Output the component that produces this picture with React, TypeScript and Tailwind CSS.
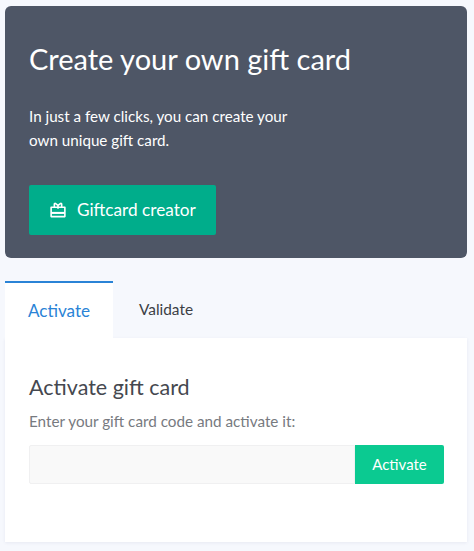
import React, { useState } from 'react';

const GiftIcon: React.FC = () => (
  <svg width="16" height="16" viewBox="0 0 17 17" fill="none" stroke="currentColor" strokeWidth="1.7" className="mr-[1px] shrink-0">
    <path d="M1.2 5.6h14.6v9.9H1.2z" strokeLinejoin="round" />
    <path d="M1.2 11.6h14.6" strokeWidth="2.2" />
    <path d="M4.6 5.6V2.4c0-.8.8-1.1 1.4-.7l2.5 2 2.5-2c.6-.4 1.4-.1 1.4.7v3.2" strokeLinejoin="round" />
    <path d="M8.5 3.7v3.6" />
  </svg>
);

export default function App() {
  const [tab, setTab] = useState('activate');

  return (
    <div className="h-[551px] w-[474px] overflow-hidden bg-[#f6f8fd] pl-[5px] pr-[7px] pt-[6px] font-['Lato',sans-serif]">
      {/* Creator banner */}
      <div className="h-[252px] rounded-[6px] bg-[#4e5666] px-[24px] pt-[35px] text-white">
        <h2 className="text-[29px] leading-[36px]">Create your own gift card</h2>
        <p className="mt-[28px] w-[280px] text-[15.2px] leading-[23.5px]">
          In just a few clicks, you can create your own unique gift card.
        </p>
        <button className="mt-[33px] flex h-[50px] w-[187px] items-center gap-[10px] rounded-[2px] bg-[#00ad8b] pl-[21px] text-[17.2px]">
          <GiftIcon />
          Giftcard creator
        </button>
      </div>

      {/* Tabs */}
      <div className="mt-[23px] flex h-[57px]">
        <button
          onClick={() => setTab('activate')}
          className="h-full w-[108px] border-t-2 border-[#2a83d6] bg-white text-[17.1px] text-[#2a83d6]"
        >
          Activate
        </button>
        <button onClick={() => setTab('validate')} className="h-full w-[106px] text-[15.4px] text-[#3c3f46]">
          Validate
        </button>
      </div>

      {/* Panel */}
      <div className="h-[204px] bg-white px-[24px] pt-[35px] shadow-[0_1px_3px_rgba(60,70,110,0.08)]">
        <h3 className="text-[21.5px] leading-[28px] text-[#45484f]">
          {tab === 'activate' ? 'Activate gift card' : 'Validate gift card'}
        </h3>
        <p className="mt-[9px] text-[15.25px] leading-[22px] text-[#777a7f]">Enter your gift card code and activate it:</p>
        <div className="mt-[13px] flex h-[39px] w-[415px]">
          <input className="h-full min-w-0 flex-1 rounded-l-[2px] border border-[#f0f0f1] bg-[#f9f9f9] outline-none" />
          <button className="h-full w-[89px] rounded-r-[2px] bg-[#0bca91] text-[15px] text-white">Activate</button>
        </div>
      </div>
    </div>
  );
}
